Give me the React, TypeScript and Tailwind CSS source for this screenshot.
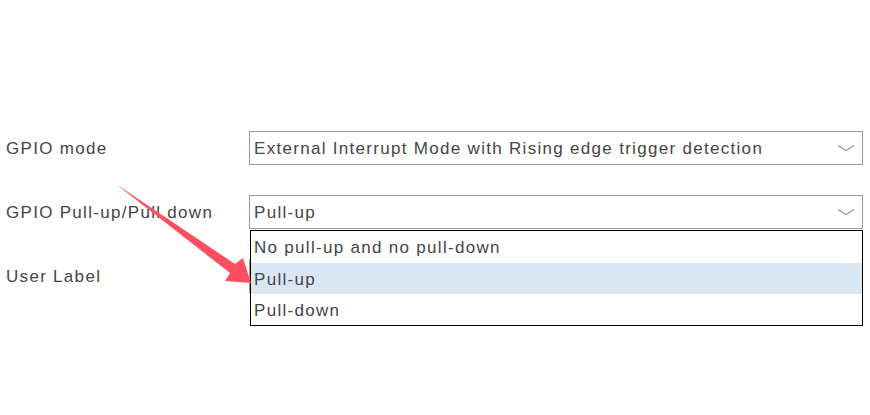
import React from "react";

const font = { fontFamily: '"Liberation Sans", Arial, sans-serif' };

const Chevron = () => (
    <svg width="18" height="8" viewBox="0 0 18 8" className="shrink-0">
        <path d="M1 1.5 L9 6.5 L17 1.5" fill="none" stroke="#9a9a9a" strokeWidth="1.2" />
    </svg>
);

function Select({ value, open }: { value: string; open?: boolean }) {
    const options = ["No pull-up and no pull-down", "Pull-up", "Pull-down"];
    return (
        <div className="relative">
            <div className="flex h-[34px] w-[614px] items-center justify-between border border-[#9a9a9a] bg-white pl-[4px] pr-[7px]">
                <span className="pt-[2px]">{value}</span>
                <Chevron />
            </div>
            {/* open list sits over the row below */}
            {open && (
                <div className="absolute left-[1px] top-[35px] z-10 w-[613px] border border-black bg-white">
                    {options.map((o, i) => (
                        <div
                            key={o}
                            className={
                                "flex items-center pl-[3px] pt-[2px] " +
                                (i === 0 ? "h-[32px] " : "h-[31px] ") +
                                (o === value ? "bg-[#d9e7f5]" : "")
                            }
                        >
                            {o}
                        </div>
                    ))}
                </div>
            )}
        </div>
    );
}

function Row({ label, children }: { label: string; children: React.ReactNode }) {
    return (
        <div className="flex items-center">
            <div className="w-[243px] shrink-0 pt-[2px]">{label}</div>
            {children}
        </div>
    );
}

export default function App() {
    return (
        <div
            className="relative h-[415px] w-[870px] overflow-hidden bg-white text-[17px] tracking-[1.3px] text-[#454545]"
            style={font}
        >
            <div className="flex flex-col gap-[30px] pl-[6px] pt-[131px]">
                <Row label="GPIO mode">
                    <Select value="External Interrupt Mode with Rising edge trigger detection" />
                </Row>
                <Row label="GPIO Pull-up/Pull down">
                    <Select value="Pull-up" open />
                </Row>
                <Row label="User Label">
                    <div className="h-[34px] w-[614px] border border-[#9a9a9a] bg-white" />
                </Row>
            </div>

            {/* annotation arrow */}
            <svg
                className="pointer-events-none absolute left-0 top-0 z-20"
                width="870"
                height="415"
                viewBox="0 0 870 415"
            >
                <polygon
                    points="116,184 235,264 243,258 251,283 225,281 230,273"
                    fill="#ff4f60"
                />
            </svg>
        </div>
    );
}
